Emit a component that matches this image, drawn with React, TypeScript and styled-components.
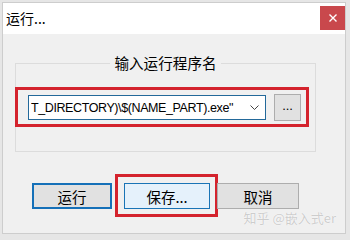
import React from "react";
import styled, { createGlobalStyle } from "styled-components";

const GlobalStyle = createGlobalStyle`
  html, body { margin: 0; padding: 0; background: #e6e6e6; }
  body {
    width: 350px; height: 240px; overflow: hidden;
    font-family: "Noto Sans CJK SC", "Noto Sans", sans-serif;
  }
  * { box-sizing: border-box; }
`;

const Window = styled.div`
  position: relative;
  margin: 2px 0 0 2px;
  width: 344px;
  height: 232px;
  border: 1px solid #cdcdcd;
  background: #f0f0f0;
  display: flex;
  flex-direction: column;
`;

const TitleBar = styled.div`
  height: 31px;
  background: #ffffff;
  display: flex;
  justify-content: space-between;
  padding-left: 3px;
`;

const Title = styled.span`
  font-size: 14px;
  line-height: 31px;
  color: #000;
`;

const CloseButton = styled.div`
  width: 25px;
  height: 24px;
  margin-top: 3px;
  background: #c9484c;
  display: flex;
  align-items: center;
  justify-content: center;
`;

const Body = styled.div`
  flex: 1;
  padding: 19px 0 0 12px;
  display: flex;
  flex-direction: column;
`;

const Group = styled.fieldset`
  width: 301px;
  margin: 0;
  padding: 0 0 24px 0;
  border: 1px solid #dcdcdc;
  min-inline-size: 0;
`;

const Legend = styled.legend`
  margin: 0 auto;
  padding: 0 4px;
  font-size: 14.6px;
  line-height: 20px;
  color: #000;
`;

const Highlight = styled.div`
  border: 3px solid #d4232d;
  display: flex;
  align-items: center;
`;

const RowHighlight = styled(Highlight)`
  width: 294px;
  height: 40px;
  margin: 14px 0 0 -1px;
  padding: 1px 5px 0 10px;
  gap: 8px;
`;

const Combo = styled.div`
  width: 239px;
  height: 25px;
  border: 1px solid #23699a;
  background: #ffffff;
  display: flex;
  align-items: center;
  padding: 0 6px 0 2px;
  overflow: hidden;
`;

const ComboText = styled.span`
  flex: 1;
  font-family: "Liberation Sans", Arial, sans-serif;
  font-size: 12.5px;
  letter-spacing: -0.4px;
  color: #000;
  white-space: nowrap;
  overflow: hidden;
`;

const Browse = styled.div`
  width: 27px;
  height: 27px;
  background: #e1e1e1;
  border: 1px solid #adadad;
  display: flex;
  align-items: center;
  justify-content: center;
  font-family: "Liberation Sans", Arial, sans-serif;
  font-size: 13px;
  color: #000;
  padding-bottom: 4px;
`;

const Buttons = styled.div`
  display: flex;
  align-items: center;
  margin: 31px 0 0 17px;
`;

const Button = styled.div<{ $w: number; $variant?: "default" | "hover" | "normal" }>`
  width: ${(p) => p.$w}px;
  height: 26px;
  display: flex;
  align-items: center;
  justify-content: center;
  font-size: 14.5px;
  color: #000;
  background: ${(p) => (p.$variant === "hover" ? "#e5f1fb" : "#e1e1e1")};
  border: ${(p) =>
    p.$variant === "default"
      ? "2px solid #1570b8"
      : p.$variant === "hover"
      ? "1px solid #1a74b6"
      : "1px solid #adadad"};
`;

const ButtonHighlight = styled(Highlight)`
  padding: 6px 5px 5px 6px;
  margin: -9px -1px -8px 3px;
`;

const Watermark = styled.div`
  position: absolute;
  right: 9px;
  bottom: 6px;
  font-size: 13px;
  color: #cdcdcd;
  text-shadow: 0 0 1px #ffffff, 0 0 1px #ffffff;
  pointer-events: none;
`;

export default function App() {
  return (
    <>
      <GlobalStyle />
      <Window>
        <TitleBar>
          <Title>运行...</Title>
          <CloseButton>
            <svg width="8" height="8" viewBox="0 0 8 8">
              <path d="M0.5 0.5 L7.5 7.5 M7.5 0.5 L0.5 7.5" stroke="#ffffff" strokeWidth="1.4" />
            </svg>
          </CloseButton>
        </TitleBar>
        <Body>
          <Group>
            <Legend>输入运行程序名</Legend>
            <RowHighlight>
              <Combo>
                <ComboText>T_DIRECTORY)\$(NAME_PART).exe"</ComboText>
                <svg width="9" height="5" viewBox="0 0 9 5">
                  <path d="M0.5 0.5 L4.5 4.5 L8.5 0.5" stroke="#444" strokeWidth="1" fill="none" />
                </svg>
              </Combo>
              <Browse>...</Browse>
            </RowHighlight>
          </Group>
          <Buttons>
            <Button $w={80} $variant="default">运行</Button>
            <ButtonHighlight>
              <Button $w={86} $variant="hover">保存...</Button>
            </ButtonHighlight>
            <Button $w={82}>取消</Button>
          </Buttons>
        </Body>
        <Watermark>知乎 @嵌入式er</Watermark>
      </Window>
    </>
  );
}
